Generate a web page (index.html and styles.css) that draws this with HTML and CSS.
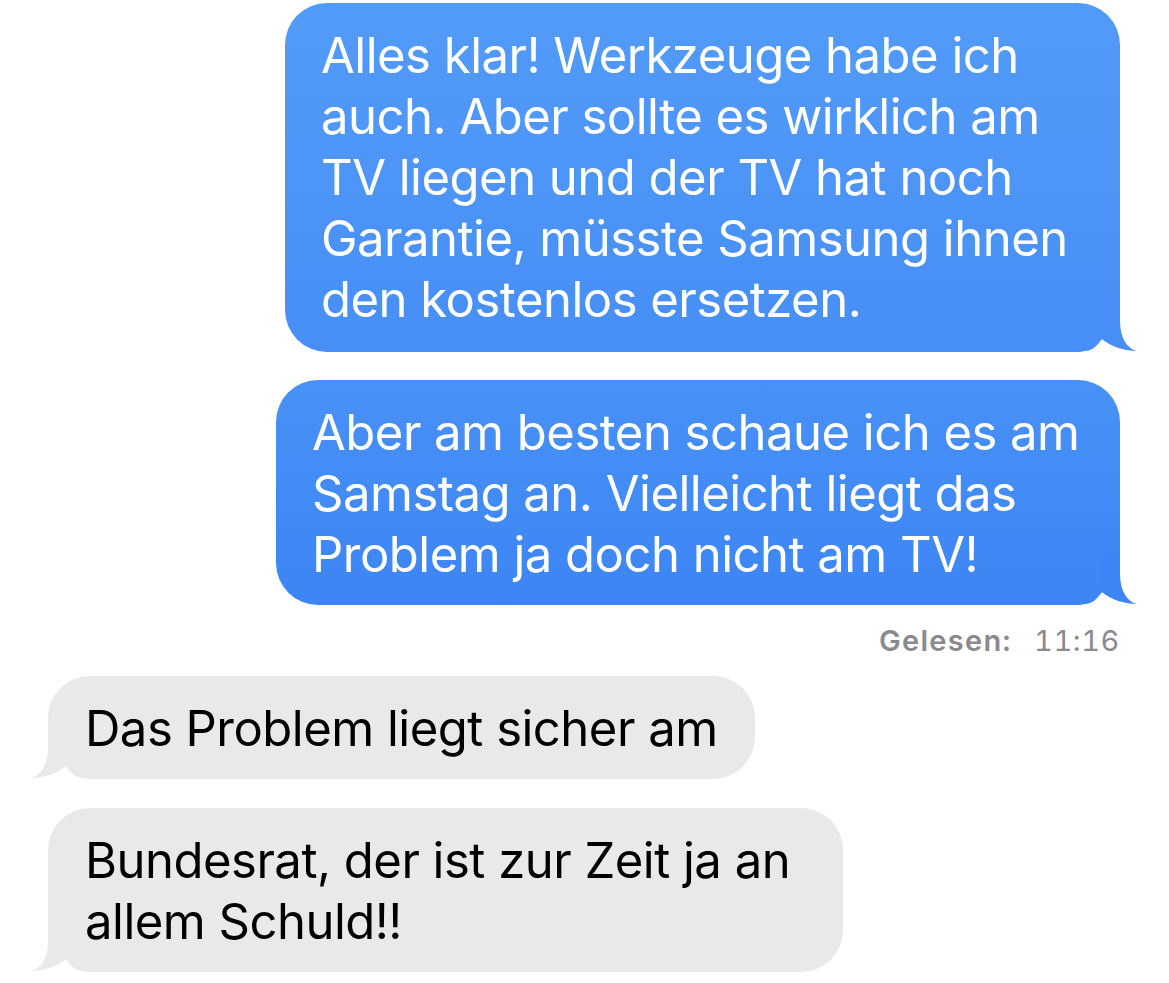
FILE: index.html
```html
<!DOCTYPE html>
<html lang="de">
<head>
<meta charset="utf-8">
<title>Nachrichten</title>
<link rel="stylesheet" href="styles.css">
</head>
<body>
<main class="chat">
  <div class="bubble sent sent-1">
    <p class="text">Alles klar! Werkzeuge habe ich<br>auch. Aber sollte es wirklich am<br>TV liegen und der TV hat noch<br>Garantie, müsste Samsung ihnen<br>den kostenlos ersetzen.</p>
    <svg class="tail tail-right" width="60" height="53" viewBox="0 0 60 53"><path class="notch" d="M5,52 C12,52 17,47 22,40 C32,48 45,52 57,52 L60,53 L0,53 Z"/><path class="tail-fill" d="M40,0 L40,22 C40,40 48,50 57,52 C45,52 32,48 22,40 L22,0 Z"/></svg>
  </div>
  <div class="bubble sent sent-2">
    <p class="text">Aber am besten schaue ich es am<br>Samstag an. Vielleicht liegt das<br>Problem ja doch nicht am TV!</p>
    <svg class="tail tail-right" width="60" height="53" viewBox="0 0 60 53"><path class="notch" d="M5,52 C12,52 17,47 22,40 C32,48 45,52 57,52 L60,53 L0,53 Z"/><path class="tail-fill" d="M40,0 L40,22 C40,40 48,50 57,52 C45,52 32,48 22,40 L22,0 Z"/></svg>
  </div>
  <div class="receipt"><b>Gelesen:</b> 11:16</div>
  <div class="bubble received recv-1">
    <p class="text">Das Problem liegt sicher am</p>
    <svg class="tail tail-left" width="60" height="53" viewBox="0 0 60 53"><path class="notch" d="M5,52 C12,52 17,47 22,40 C32,48 45,52 57,52 L60,53 L0,53 Z"/><path class="tail-fill" d="M40,0 L40,22 C40,40 48,50 57,52 C45,52 32,48 22,40 L22,0 Z"/></svg>
  </div>
  <div class="bubble received recv-2">
    <p class="text">Bundesrat, der ist zur Zeit ja an<br>allem Schuld!!</p>
    <svg class="tail tail-left" width="60" height="53" viewBox="0 0 60 53"><path class="notch" d="M5,52 C12,52 17,47 22,40 C32,48 45,52 57,52 L60,53 L0,53 Z"/><path class="tail-fill" d="M40,0 L40,22 C40,40 48,50 57,52 C45,52 32,48 22,40 L22,0 Z"/></svg>
  </div>
</main>
</body>
</html>
```

FILE: styles.css
```css
html, body {
  margin: 0;
  padding: 0;
  background: #ffffff;
}

body {
  font-family: Inter, "Noto Sans", "Liberation Sans", sans-serif;
  -webkit-font-smoothing: antialiased;
}

.chat {
  display: flex;
  flex-direction: column;
  padding: 3px 49px 0 48px;
}

.bubble {
  position: relative;
  box-sizing: border-box;
  border-radius: 42px;
  padding: 22px 0 20px 36px;
}

.text {
  margin: 0;
  font-size: 49px;
  line-height: 61px;
  white-space: nowrap;
  letter-spacing: -0.5px;
}

.sent {
  align-self: flex-end;
  color: #ffffff;
  border-bottom-right-radius: 0;
}

.sent-1 {
  width: 835px;
  padding-bottom: 22px;
  background: linear-gradient(180deg, #539bf8 0%, #478ef6 100%);
}

.sent-2 {
  width: 844px;
  margin-top: 28px;
  background: linear-gradient(180deg, #4891f6 0%, #3d85f4 100%);
}

.received {
  align-self: flex-start;
  color: #000000;
  background: #e9e9eb;
  border-bottom-left-radius: 0;
  padding-left: 37px;
}

.recv-1 {
  width: 707px;
  margin-top: 15px;
}

.recv-2 {
  width: 795px;
  margin-top: 29px;
}

.receipt {
  align-self: flex-end;
  margin-top: 16px;
  font-size: 29px;
  line-height: 40px;
  color: #8a8a8e;
  letter-spacing: 0.6px;
  font-variant-numeric: tabular-nums;
  font-feature-settings: "tnum" 1;
}

.receipt b {
  font-weight: 600;
  letter-spacing: 1.3px;
  margin-right: 14px;
}

.tail {
  position: absolute;
  bottom: 0;
  display: block;
}

.tail-right {
  right: -20px;
}

.tail-left {
  left: -20px;
  transform: scaleX(-1);
}

.notch {
  fill: #ffffff;
}

.sent-1 .tail-fill {
  fill: #478ef6;
}

.sent-2 .tail-fill {
  fill: #3d85f4;
}

.received .tail-fill {
  fill: #e9e9eb;
}
```
